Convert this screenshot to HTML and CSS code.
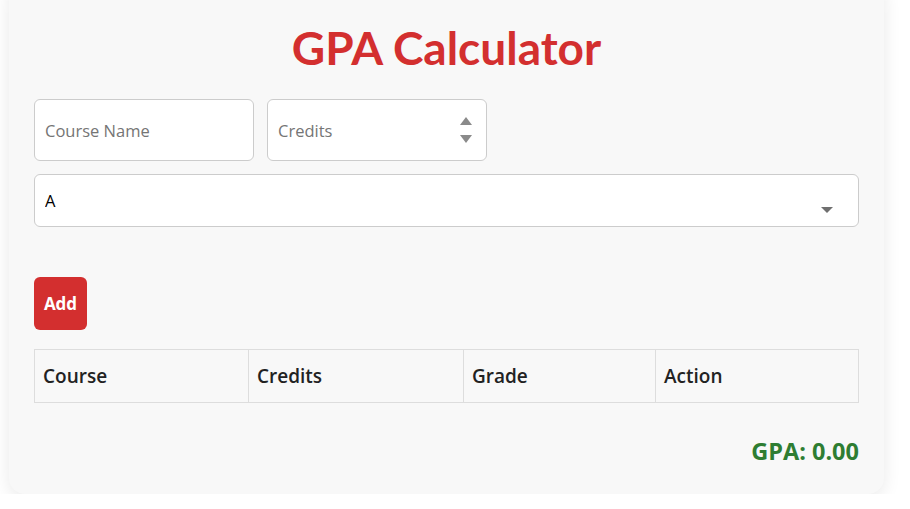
FILE: index.html
```html
<!DOCTYPE html>
<html>
<head>
<meta charset="utf-8">
<link rel="stylesheet" href="styles.css">
</head>
<body>
<div class="card">
  <h1 class="title">GPA Calculator</h1>
  <div class="inputs">
    <input class="field" type="text" placeholder="Course Name">
    <div class="num-wrap">
      <input class="field num" type="number" placeholder="Credits">
      <span class="spin"><span class="up"></span><span class="down"></span></span>
    </div>
  </div>
  <div class="select-wrap">
    <select class="grade">
      <option>A</option>
      <option>B</option>
      <option>C</option>
      <option>D</option>
      <option>F</option>
    </select>
    <span class="caret"></span>
  </div>
  <button class="add">Add</button>
  <table class="courses">
    <thead>
      <tr><th class="c1">Course</th><th class="c2">Credits</th><th class="c3">Grade</th><th class="c4">Action</th></tr>
    </thead>
    <tbody></tbody>
  </table>
  <div class="gpa">GPA: 0.00</div>
</div>
</body>
</html>
```
FILE: styles.css
```css
html, body { margin: 0; padding: 0; background: #ffffff; }
body { font-family: "Open Sans", "Noto Sans", sans-serif; }
.card {
  width: 825px;
  margin: -20px 0 0 9px;
  padding: 25px 25px 0 25px;
  height: 489px;
  box-sizing: content-box;
  background: #f8f8f8;
  border-radius: 16px;
  box-shadow: 0 4px 18px rgba(0,0,0,0.09);
}
.title {
  margin: 0;
  padding-top: 16px;
  text-align: center;
  font-family: "Lato", sans-serif;
  font-weight: 700;
  font-size: 46px;
  line-height: 54px;
  color: #d32f2f;
}
.inputs { display: flex; gap: 13px; margin-top: 24px; }
.field {
  width: 220px;
  height: 62px;
  box-sizing: border-box;
  border: 1px solid #cccccc;
  border-radius: 6px;
  background: #fff;
  padding: 0 10px;
  font-family: inherit;
  font-size: 16.5px;
  color: #222;
  outline: none;
}
.field::placeholder { color: #757575; }
.num-wrap { position: relative; }
.num { -moz-appearance: textfield; }
.num::-webkit-inner-spin-button, .num::-webkit-outer-spin-button { -webkit-appearance: none; margin: 0; }
.spin {
  position: absolute; right: 14px; top: 16px;
  width: 14px; height: 30px;
  display: flex; flex-direction: column; align-items: center; justify-content: space-between;
  padding: 2px 0;
  box-sizing: border-box;
}
.spin .up { width: 0; height: 0; border-left: 6px solid transparent; border-right: 6px solid transparent; border-bottom: 8px solid #8a8a8a; }
.spin .down { width: 0; height: 0; border-left: 6px solid transparent; border-right: 6px solid transparent; border-top: 8px solid #8a8a8a; }
.select-wrap { position: relative; margin-top: 13px; }
.grade {
  width: 100%;
  height: 53px;
  box-sizing: border-box;
  border: 1px solid #cccccc;
  border-radius: 6px;
  background: #fff;
  padding: 0 10px;
  font-family: inherit;
  font-size: 16.5px;
  color: #000;
  -webkit-appearance: none;
  appearance: none;
  outline: none;
}
.caret {
  position: absolute; right: 26px; top: 33px;
  width: 0; height: 0;
  border-left: 6px solid transparent; border-right: 6px solid transparent; border-top: 6px solid #6f6f6f;
  pointer-events: none;
}
.add {
  display: block;
  margin-top: 50px;
  width: 53px; height: 53px;
  border: none; border-radius: 6px;
  background: #d32f2f; color: #fff;
  font-family: inherit; font-weight: 700; font-size: 17px;
  padding: 0;
}
.courses {
  margin-top: 19px;
  width: 100%;
  border-collapse: collapse;
}
.courses th {
  height: 53px;
  box-sizing: border-box;
  border: 1px solid #dddddd;
  text-align: left;
  padding: 0 8px;
  font-weight: 600;
  font-size: 19px;
  color: #222;
  background: #f8f8f8;
}
.c1 { width: 214px; }
.c2 { width: 215px; }
.c3 { width: 192px; }
.gpa {
  margin-top: 32px;
  text-align: right;
  font-weight: 700;
  font-size: 23.5px;
  color: #2e7d32;
}
```
